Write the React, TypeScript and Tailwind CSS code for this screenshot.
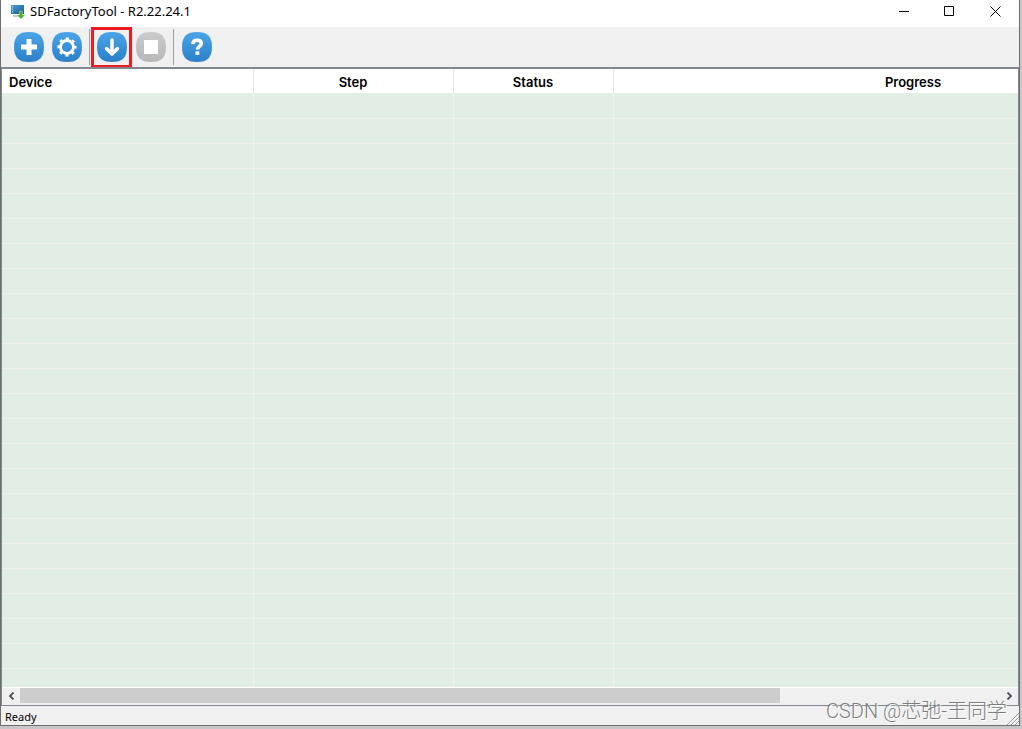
import React from "react";

const columns = [
  { label: "Device", width: "w-[251px]", align: "text-left pl-[7px]" },
  { label: "Step", width: "w-[200px]", align: "text-center" },
  { label: "Status", width: "w-[160px]", align: "text-center" },
  { label: "Progress", width: "w-[600px]", align: "text-center" },
];

const rows = Array.from({ length: 24 }, (_, i) => i);

function Badge({ muted, children }: { muted?: boolean; children: React.ReactNode }) {
  const fill = muted ? "url(#badge-gray)" : "url(#badge-blue)";
  return (
    <svg width="32" height="32" viewBox="0 0 32 32" aria-hidden="true">
      <defs>
        <linearGradient id="badge-blue" x1="0" y1="0" x2="0" y2="1">
          <stop offset="0" stopColor="#4ba4e8" />
          <stop offset="1" stopColor="#2b80c8" />
        </linearGradient>
        <linearGradient id="badge-gray" x1="0" y1="0" x2="0" y2="1">
          <stop offset="0" stopColor="#cbcbcb" />
          <stop offset="1" stopColor="#b8b8b8" />
        </linearGradient>
      </defs>
      <path
        d="M16 1C26.5 1 31 5.500 31 16S26.500 31 16 31S1 26.500 1 16S5.500 1 16 1Z"
        fill={fill}
      />
      {children}
    </svg>
  );
}

function ToolButton({
  label,
  disabled,
  children,
}: {
  label: string;
  disabled?: boolean;
  children: React.ReactNode;
}) {
  return (
    <button type="button" aria-label={label} disabled={disabled} className="block h-8 w-8">
      <Badge muted={disabled}>{children}</Badge>
    </button>
  );
}

function AppIcon() {
  return (
    <svg width="16" height="16" viewBox="0 0 16 16" aria-hidden="true">
      <defs>
        <linearGradient id="screen" x1="0" y1="0" x2="1" y2="1">
          <stop offset="0" stopColor="#4c9fd6" />
          <stop offset="1" stopColor="#17598f" />
        </linearGradient>
      </defs>
      <path d="M1 1h13v9H1z" fill="url(#screen)" />
      <path d="M2.500 2v7.500" stroke="#a8d6f0" strokeDasharray="1.500 1" />
      <path d="M3 11h8v2H3z" fill="#c2cbd1" />
      <path d="M9.500 7h3v4h2.500L11 15 7 11h2.500z" fill="#4cae2f" stroke="#e8f5e2" strokeWidth=".3" />
    </svg>
  );
}

function TitleBar() {
  return (
    <header className="flex h-[27px] shrink-0 items-start justify-between bg-white">
      <div className="flex h-6 items-center gap-1 pl-[9px]">
        <AppIcon />
        <h1 className="font-['Noto_Sans',sans-serif] text-[13px] text-black">
          SDFactoryTool - R2.22.24.1
        </h1>
      </div>
      <div className="flex">
        <button type="button" aria-label="Minimize" className="flex h-[23px] w-[45px] items-center justify-center">
          <svg width="11" height="11" viewBox="0 0 11 11">
            <path d="M0 5.500h10" stroke="#000" />
          </svg>
        </button>
        <button type="button" aria-label="Maximize" className="flex h-[23px] w-[45px] items-center justify-center">
          <svg width="11" height="11" viewBox="0 0 11 11">
            <path d="M.5.500h9v9h-9z" fill="none" stroke="#000" />
          </svg>
        </button>
        <button type="button" aria-label="Close" className="flex h-[23px] w-[47px] items-center justify-center">
          <svg width="11" height="11" viewBox="0 0 11 11">
            <path d="M.5.500l10 10M10.500.500l-10 10" stroke="#000" />
          </svg>
        </button>
      </div>
    </header>
  );
}

function Toolbar() {
  return (
    <div role="toolbar" className="flex h-10 shrink-0 items-center bg-[#f0f0f0] pl-3">
      <div className="flex gap-[6px]">
        <ToolButton label="Add device">
          <path d="M16 8v16M8 16h16" stroke="#fff" strokeWidth="5" />
        </ToolButton>
        <ToolButton label="Settings">
          <circle cx="16" cy="16" r="6.500" fill="none" stroke="#fff" strokeWidth="2.800" />
          <circle
            cx="16"
            cy="16"
            r="8.300"
            fill="none"
            stroke="#fff"
            strokeWidth="2.600"
            strokeDasharray="3 3.519"
            strokeDashoffset="1.500"
          />
        </ToolButton>
      </div>
      <div className="ml-[6px] h-9 w-px bg-[#a0a0a0]" />
      <div className="ml-px flex h-[41px] w-[41px] shrink-0 items-center justify-center border-3 border-[#ed1c24]">
        <ToolButton label="Download">
          <path
            d="M16 9v13M10.500 17.500L16 23l5.500-5.500"
            fill="none"
            stroke="#fff"
            strokeWidth="3.500"
            strokeLinecap="round"
            strokeLinejoin="round"
          />
        </ToolButton>
      </div>
      <div className="ml-[3px]">
        <ToolButton label="Stop" disabled>
          <path d="M9 9h14v14H9z" fill="#fff" />
        </ToolButton>
      </div>
      <div className="ml-[6px] h-9 w-px bg-[#a0a0a0]" />
      <div className="ml-[7px]">
        <ToolButton label="Help">
          <path
            d="M11.800 13c.2-2.600 1.800-3.800 4.300-3.800 2.500 0 4.200 1.200 4.200 3.200 0 2.600-3.800 2.800-3.800 6"
            fill="none"
            stroke="#fff"
            strokeWidth="3.600"
          />
          <path d="M14.500 20.300h3.800v3.500h-3.800z" fill="#fff" />
        </ToolButton>
      </div>
    </div>
  );
}

function DeviceTable() {
  return (
    <div className="min-h-0 flex-1 overflow-hidden bg-[#e2ede4]">
      <table className="w-[1311px] table-fixed border-collapse">
        <thead>
          <tr className="h-6 bg-white">
            {columns.map(({ label, width, align }) => (
              <th
                key={label}
                scope="col"
                className={`${width} ${align} border-r border-[#e5e5e5] p-0 pt-[2px] font-[Inter,sans-serif] text-[13px] leading-4 font-semibold text-black`}
              >
                {label}
              </th>
            ))}
            <td />
          </tr>
        </thead>
        <tbody>
          {rows.map((row) => (
            <tr key={row} className="h-[25px]">
              {columns.map(({ label }) => (
                <td key={label} className="border-r border-b border-[#f0f0f0] p-0" />
              ))}
              <td className="border-b border-[#f0f0f0] p-0" />
            </tr>
          ))}
        </tbody>
      </table>
    </div>
  );
}

function ScrollBar() {
  return (
    <div className="flex h-[18px] shrink-0 items-start border-t border-white bg-[#f0f0f0]">
      <button type="button" aria-label="Scroll left" className="flex h-4 w-[18px] items-center justify-center">
        <svg width="7" height="8" viewBox="0 0 7 8">
          <path d="M5.500.500L2 4l3.500 3.500" fill="none" stroke="#505050" strokeWidth="1.800" />
        </svg>
      </button>
      <div className="h-4 flex-1">
        <div className="h-[15px] w-31/40 bg-[#cdcdcd]" />
      </div>
      <button type="button" aria-label="Scroll right" className="flex h-4 w-[18px] items-center justify-center">
        <svg width="7" height="8" viewBox="0 0 7 8">
          <path d="M1.500.500L5 4 1.500 7.500" fill="none" stroke="#505050" strokeWidth="1.800" />
        </svg>
      </button>
    </div>
  );
}

function StatusBar() {
  return (
    <footer className="relative flex h-[19px] shrink-0 items-center bg-[#f0f0f0] pt-[3px] pl-1">
      <span className="font-['Noto_Sans',sans-serif] text-[11px] leading-4 text-black">Ready</span>
      <svg className="absolute right-0 bottom-0" width="13" height="13" viewBox="0 0 13 13">
        <path d="M1 13L13 1M5 13l8-8M9 13l4-4" stroke="#9a9a9a" />
      </svg>
      <span className="absolute right-3 bottom-0 font-[Roboto,'Noto_Sans_CJK_SC',sans-serif] text-xl leading-7 font-light whitespace-nowrap text-[#7c7f7f] [text-shadow:1px_1px_0_#fff]">
        CSDN @芯弛-王同学
      </span>
    </footer>
  );
}

export default function App() {
  return (
    <div className="h-screen bg-[#c8c6c8] pr-[2px] pb-[3px]">
      <div className="flex h-full flex-col border-r border-b border-l border-[#6e6e70]">
        <TitleBar />
        <Toolbar />
        <main className="flex min-h-0 flex-1 flex-col border-t-2 border-r border-b border-l border-[#828790]">
          <DeviceTable />
          <ScrollBar />
        </main>
        <StatusBar />
      </div>
    </div>
  );
}
